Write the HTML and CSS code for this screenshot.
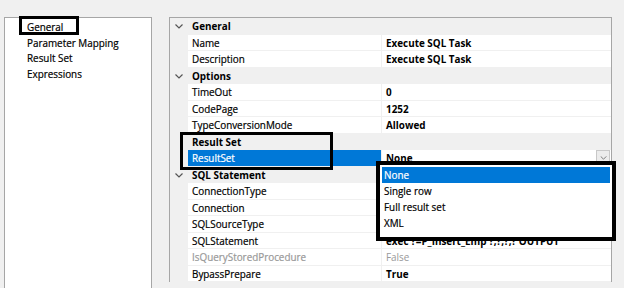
FILE: index.html
```html
<!DOCTYPE html>
<html>
<head>
<meta charset="utf-8">
<link rel="stylesheet" href="styles.css">
</head>
<body>
<div class="page">
  <div class="nav">
    <div class="nav-item">General</div>
    <div class="nav-item">Parameter Mapping</div>
    <div class="nav-item">Result Set</div>
    <div class="nav-item">Expressions</div>
  </div>
  <div class="grid">
    <div class="row cat"><span class="gut"><svg class="chev" viewBox="0 0 8 5"><path d="M0.5 0.5 L4 4 L7.5 0.5"/></svg></span><span class="cname">General</span></div>
    <div class="row"><span class="gut"></span><span class="name">Name</span><span class="val">Execute SQL Task</span></div>
    <div class="row"><span class="gut"></span><span class="name">Description</span><span class="val">Execute SQL Task</span></div>
    <div class="row cat"><span class="gut"><svg class="chev" viewBox="0 0 8 5"><path d="M0.5 0.5 L4 4 L7.5 0.5"/></svg></span><span class="cname">Options</span></div>
    <div class="row"><span class="gut"></span><span class="name">TimeOut</span><span class="val">0</span></div>
    <div class="row"><span class="gut"></span><span class="name">CodePage</span><span class="val">1252</span></div>
    <div class="row"><span class="gut"></span><span class="name">TypeConversionMode</span><span class="val">Allowed</span></div>
    <div class="row cat"><span class="gut"></span><span class="cname">Result Set</span></div>
    <div class="row sel"><span class="gut"></span><span class="name">ResultSet</span><span class="val">None<span class="ddbtn"><svg viewBox="0 0 8 5"><path d="M0.5 0.5 L4 4 L7.5 0.5"/></svg></span></span></div>
    <div class="row cat"><span class="gut"><svg class="chev" viewBox="0 0 8 5"><path d="M0.5 0.5 L4 4 L7.5 0.5"/></svg></span><span class="cname">SQL Statement</span></div>
    <div class="row"><span class="gut"></span><span class="name">ConnectionType</span><span class="val"></span></div>
    <div class="row"><span class="gut"></span><span class="name">Connection</span><span class="val"></span></div>
    <div class="row"><span class="gut"></span><span class="name">SQLSourceType</span><span class="val"></span></div>
    <div class="row"><span class="gut"></span><span class="name">SQLStatement</span><span class="val">exec ?=P_Insert_Emp ?,?,?,? OUTPUT</span></div>
    <div class="row dis"><span class="gut"></span><span class="name">IsQueryStoredProcedure</span><span class="val">False</span></div>
    <div class="row"><span class="gut"></span><span class="name">BypassPrepare</span><span class="val">True</span></div>
  </div>
</div>

<div class="mark mark-general"></div>
<div class="mark mark-result"></div>
<div class="popup">
  <div class="opt active">None</div>
  <div class="opt">Single row</div>
  <div class="opt">Full result set</div>
  <div class="opt">XML</div>
</div>
</body>
</html>
```
FILE: styles.css
```css
html, body {
  margin: 0;
  padding: 0;
  background: #f0f0f0;
  font-family: "Open Sans", "Noto Sans", sans-serif;
  font-size: 9.9px;
  color: #000;
  overflow: hidden;
  -webkit-text-stroke: 0.2px currentColor;
}
.page {
  display: flex;
  padding-top: 17px;
  height: 288px;
  box-sizing: border-box;
}
.nav {
  margin-left: 4px;
  width: 148px;
  box-sizing: border-box;
  background: #fff;
  border: 1px solid #a6a6a6;
  border-bottom: none;
  padding-top: 2px;
  padding-left: 22px;
}
.nav-item {
  height: 15.5px;
  line-height: 15.5px;
  white-space: nowrap;
}
.grid {
  margin-left: 17px;
  width: 443px;
  box-sizing: border-box;
  border: 1px solid #a6a6a6;
  border-bottom: none;
  background: #f0f0f0;
  align-self: flex-start;
}
.row {
  display: flex;
  height: 16.5px;
  line-height: 17px;
  white-space: nowrap;
}
.gut {
  width: 18px;
  flex: none;
  position: relative;
}
.chev {
  position: absolute;
  left: 5px;
  top: 6px;
  width: 8px;
  height: 5px;
  fill: none;
  stroke: #555;
  stroke-width: 1.2;
}
.cname {
  font-weight: bold;
  padding-left: 4px;
  -webkit-text-stroke: 0;
}
.name {
  width: 194px;
  flex: none;
  box-sizing: border-box;
  padding-left: 4px;
  background: #fff;
  border-bottom: 1px solid #f0f0f0;
  border-right: 1px solid #f0f0f0;
  overflow: hidden;
}
.val {
  flex: 1;
  background: #fff;
  border-bottom: 1px solid #f0f0f0;
  padding-left: 4px;
  font-weight: bold;
  -webkit-text-stroke: 0;
  position: relative;
  overflow: hidden;
}
.sel .name {
  background: #0078d7;
  color: #fff;
}
.dis .name, .dis .val {
  color: #999;
  font-weight: normal;
}
.ddbtn {
  position: absolute;
  right: 1px;
  top: 0;
  width: 14px;
  height: 14px;
  box-sizing: border-box;
  border: 1px solid #c8c8c8;
  background: #ececec;
}
.ddbtn svg {
  position: absolute;
  left: 2.5px;
  top: 4.5px;
  width: 7px;
  height: 4px;
  fill: none;
  stroke: #777;
  stroke-width: 1.2;
}
.mark {
  position: absolute;
  border: 3.5px solid #000;
  box-sizing: border-box;
}
.mark-general {
  left: 19px;
  top: 16px;
  width: 60px;
  height: 19px;
  border-width: 3px;
}
.mark-result {
  left: 180px;
  top: 132px;
  width: 153px;
  height: 38px;
}
.popup {
  position: absolute;
  left: 376px;
  top: 161px;
  width: 240px;
  height: 80px;
  box-sizing: border-box;
  border: 4px solid #000;
  background: #fff;
  padding: 2px 2px 0 2px;
}
.opt {
  height: 16px;
  line-height: 16px;
  padding-left: 2px;
  white-space: nowrap;
}
.opt.active {
  background: #0078d7;
  color: #fff;
}
```
